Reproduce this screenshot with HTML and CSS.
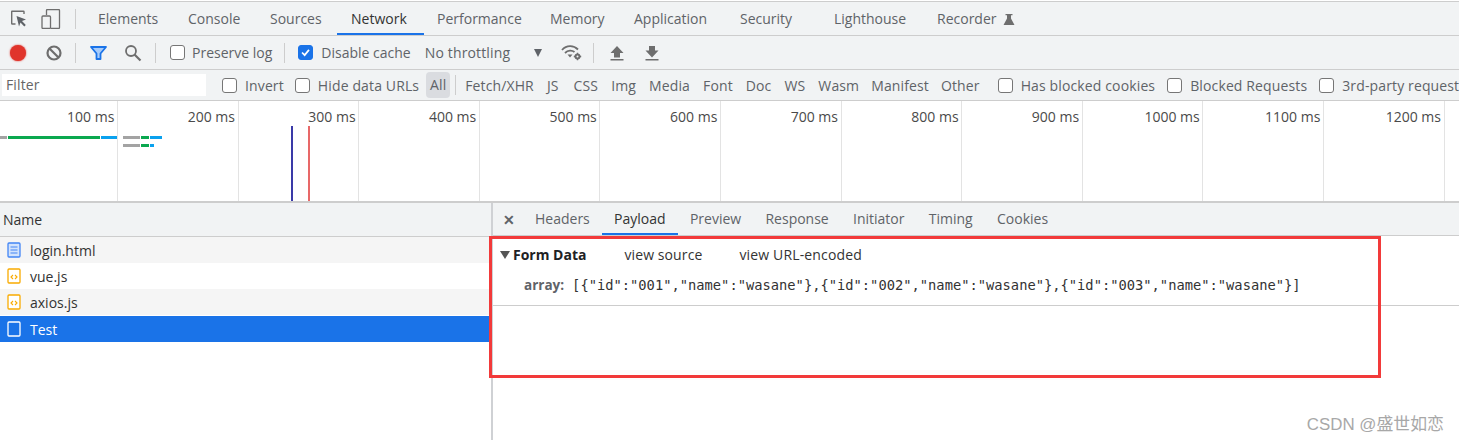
FILE: index.html
```html
<!DOCTYPE html>
<html lang="en">
<head>
<meta charset="utf-8">
<title>Network</title>
<link rel="stylesheet" href="styles.css">
</head>
<body>
<div class="page">
  <div class="tabbar">
    <div class="tools">
      <svg class="ic" width="20" height="20" viewBox="0 0 20 20"><path d="M3.500 1.500H14.500a1.200 1.200 0 0 1 1.200 1.200V5H14.300V2.900H3.400V14.300H6.500V15.700H3.200A1.200 1.200 0 0 1 2 14.500V2.700A1.200 1.200 0 0 1 3.500 1.500z" fill="#6e6e6e"/><path d="M7.500 7l9.500 3.500-4 1.500 3.800 4-1.500 1.500-3.800-4-1.500 4z" fill="#5f6368"/></svg>
      <svg class="ic" width="20" height="20" viewBox="0 0 20 20"><path d="M5.500 6V1.500a1 1 0 0 1 1-1h11a1 1 0 0 1 1 1v17a1 1 0 0 1-1 1h-7.500" fill="none" stroke="#6e6e6e" stroke-width="1.300"/><rect x="1" y="7" width="8.500" height="12.500" rx="1" fill="none" stroke="#6e6e6e" stroke-width="1.300"/></svg>
    </div>
    <span class="vsep tabsep"></span>
    <span class="tab t1">Elements</span>
    <span class="tab t2">Console</span>
    <span class="tab t3">Sources</span>
    <span class="tab active t4">Network</span>
    <span class="tab t5">Performance</span>
    <span class="tab t6">Memory</span>
    <span class="tab t7">Application</span>
    <span class="tab t8">Security</span>
    <span class="tab t9">Lighthouse</span>
    <span class="tab t10">Recorder
      <svg class="flask" width="12" height="13" viewBox="0 0 12 13"><path d="M2.500 1h7v1.300H8v3.200l3.500 6.500H.5L4 5.500V2.300H2.500z" fill="#6e6e6e"/></svg>
    </span>
  </div>

  <div class="toolbar">
    <span class="record"></span>
    <svg class="clear" width="18" height="18" viewBox="0 0 18 18"><circle cx="9" cy="9" r="6.500" fill="none" stroke="#6e6e6e" stroke-width="2.200"/><path d="M4.500 4.500l9 9" stroke="#6e6e6e" stroke-width="2.200"/></svg>
    <span class="vsep s1"></span>
    <svg class="filter" width="20" height="18" viewBox="0 0 20 18"><path d="M2 3h15l-5.500 6.500v5.500h-4v-5.500z" fill="#a8ccfa" stroke="#1a73e8" stroke-width="1.800" stroke-linejoin="round"/></svg>
    <svg class="search" width="20" height="20" viewBox="0 0 20 20"><circle cx="8" cy="8" r="5" fill="none" stroke="#6e6e6e" stroke-width="1.800"/><path d="M11.500 11.500l6 6" stroke="#6e6e6e" stroke-width="2.200"/></svg>
    <span class="vsep s2"></span>
    <label class="check c1"><span class="box"></span>Preserve log</label>
    <span class="vsep s3"></span>
    <label class="check c2"><span class="box on"><svg width="15" height="15" viewBox="0 0 15 15"><path d="M3.500 7.500l3 3 5-6" fill="none" stroke="#fff" stroke-width="2"/></svg></span>Disable cache</label>
    <span class="throttle">No throttling</span>
    <span class="caret"></span>
    <svg class="wifi" width="22" height="17" viewBox="0 0 22 17"><path d="M1 6C5.500 1 12.500 1 17 5.500" fill="none" stroke="#6e6e6e" stroke-width="1.800"/><path d="M4 9C7 6 11 6 13.500 8" fill="none" stroke="#6e6e6e" stroke-width="1.800"/><path d="M6.500 10.500h5L9 13.500z" fill="#6e6e6e"/><circle cx="16.500" cy="12.500" r="2" fill="none" stroke="#6e6e6e" stroke-width="2"/><path d="M16.500 8.800v1.500M16.500 14.700v1.500M12.800 12.500h1.500M18.700 12.500h1.500" stroke="#6e6e6e" stroke-width="1.400"/></svg>
    <span class="vsep s4"></span>
    <svg class="arrow a1" width="16" height="18" viewBox="0 0 16 18"><path d="M8 2l6.500 7H11v4.500H5V9H1.500z M1.500 15h13v1.500h-13z" fill="#6e6e6e"/></svg>
    <svg class="arrow a2" width="16" height="18" viewBox="0 0 16 18"><path d="M5 2h6v4.500h3.500L8 13.500 1.500 6.500H5z M1.500 15h13v1.500h-13z" fill="#6e6e6e"/></svg>
  </div>

  <div class="filterbar">
    <span class="filterinput">Filter</span>
    <label class="check f1"><span class="box"></span>Invert</label>
    <label class="check f2"><span class="box"></span>Hide data URLs</label>
    <span class="pill">All</span>
    <span class="vsep s5"></span>
    <span class="ft w1">Fetch/XHR</span>
    <span class="ft js">JS</span>
    <span class="ft">CSS</span>
    <span class="ft">Img</span>
    <span class="ft">Media</span>
    <span class="ft">Font</span>
    <span class="ft">Doc</span>
    <span class="ft">WS</span>
    <span class="ft">Wasm</span>
    <span class="ft manifest">Manifest</span>
    <span class="ft">Other</span>
    <label class="check f3"><span class="box"></span>Has blocked cookies</label>
    <label class="check f4"><span class="box"></span>Blocked Requests</label>
    <label class="check f5"><span class="box"></span>3rd-party requests</label>
  </div>

  <div class="timeline">
    <div class="tick">100 ms</div><div class="tick">200 ms</div><div class="tick">300 ms</div><div class="tick">400 ms</div>
    <div class="tick">500 ms</div><div class="tick">600 ms</div><div class="tick">700 ms</div><div class="tick">800 ms</div>
    <div class="tick">900 ms</div><div class="tick">1000 ms</div><div class="tick">1100 ms</div><div class="tick">1200 ms</div>
    <span class="bar gray b1"></span><span class="bar green b2"></span><span class="bar blue b3"></span>
    <span class="bar gray b4"></span><span class="bar green b5"></span><span class="bar blue b6"></span>
    <span class="bar gray b7"></span><span class="bar green b8"></span><span class="bar blue b9"></span>
    <span class="mark dcl"></span><span class="mark load"></span>
  </div>

  <div class="split">
    <div class="left">
      <div class="namehead">Name</div>
      <div class="row alt"><svg width="14" height="16" viewBox="0 0 14 16"><rect x="1" y="1" width="12" height="14" rx="1" fill="#d2e3fc" stroke="#4285f4" stroke-width="1.300"/><path d="M3.500 5h7M3.500 8h7M3.500 11h7" stroke="#4285f4" stroke-width="1.200"/></svg>login.html</div>
      <div class="row"><svg width="14" height="16" viewBox="0 0 14 16"><rect x="1" y="1" width="12" height="14" rx="1" fill="#fff" stroke="#f9ab00" stroke-width="1.300"/><path d="M6 7L4 9l2 2M8 7l2 2-2 2" fill="none" stroke="#f9ab00" stroke-width="1.100"/></svg>vue.js</div>
      <div class="row alt"><svg width="14" height="16" viewBox="0 0 14 16"><rect x="1" y="1" width="12" height="14" rx="1" fill="#fff" stroke="#f9ab00" stroke-width="1.300"/><path d="M6 7L4 9l2 2M8 7l2 2-2 2" fill="none" stroke="#f9ab00" stroke-width="1.100"/></svg>axios.js</div>
      <div class="row sel"><svg width="14" height="16" viewBox="0 0 14 16"><rect x="1" y="1" width="12" height="14" rx="1" fill="none" stroke="#fff" stroke-width="1.300"/></svg>Test</div>
    </div>
    <div class="right">
      <div class="dtabs">
        <span class="close">✕</span>
        <span class="dtab">Headers</span>
        <span class="dtab active">Payload</span>
        <span class="dtab">Preview</span>
        <span class="dtab">Response</span>
        <span class="dtab">Initiator</span>
        <span class="dtab">Timing</span>
        <span class="dtab">Cookies</span>
      </div>
      <div class="formhead">
        <span class="tri"></span><b class="ftitle">Form Data</b>
        <span class="vs">view source</span><span class="vu">view URL-encoded</span>
      </div>
      <div class="formrow"><b class="key">array:</b><code class="val">[{"id":"001","name":"wasane"},{"id":"002","name":"wasane"},{"id":"003","name":"wasane"}]</code></div>
    </div>
  </div>
  <div class="redbox"></div>
  <div class="mark-csdn">CSDN @盛世如恋</div>
</div>
</body>
</html>
```

FILE: styles.css
```css
* { box-sizing: border-box; }
html, body { margin: 0; padding: 0; background: #fff; }
body { font-family: "Open Sans", "Noto Sans", sans-serif; font-size: 14px; color: #5f6368; }
.page { position: relative; width: 1459px; height: 440px; overflow: hidden; }

.tabbar { display: flex; align-items: center; height: 35px; margin-top: 1px; background: #f1f3f4; border-top: 1px solid #cdcdcd; border-bottom: 1px solid #cdcdcd; padding-left: 9px; white-space: nowrap; }
.tools { display: flex; gap: 12px; width: 66px; }
.ic { display: block; }
.vsep { display: inline-block; width: 1px; height: 20px; background: #cdcdcd; flex: none; }
.tab { height: 33px; line-height: 33px; flex: none; }
.t1 { margin-left: 22px; width: 90px; }
.t2 { width: 82px; }
.t3 { width: 67px; }
.t4 { width: 87px; padding-left: 14px; color: #333; border-bottom: 2px solid #1a73e8; }
.t5 { margin-left: 13px; width: 113px; }
.t6 { width: 84px; }
.t7 { width: 106px; }
.t8 { width: 94px; }
.t9 { width: 103px; }
.flask { vertical-align: -2px; margin-left: 3px; }

.toolbar { display: flex; align-items: center; height: 34px; background: #f1f3f4; border-bottom: 1px solid #cdcdcd; white-space: nowrap; }
.record { width: 16px; height: 16px; border-radius: 50%; background: #e0342b; box-shadow: 0 0 2px #e0342b; margin-left: 10px; flex: none; }
.clear { margin-left: 19px; }
.toolbar .s1 { margin-left: 12px; }
.filter { margin-left: 13px; }
.search { margin-left: 14px; }
.toolbar .s2 { margin-left: 12px; }
.check { display: inline-flex; align-items: center; flex: none; }
.box { display: inline-flex; align-items: center; justify-content: center; width: 15px; height: 15px; border: 1px solid #767676; border-radius: 3px; background: #fff; margin-right: 8px; flex: none; }
.box.on { background: #1a73e8; border-color: #1a73e8; }
.c1 { margin-left: 14px; }
.c1 .box { margin-right: 7px; }
.s3 { margin-left: 12px; }
.c2 { margin-left: 13px; }
.throttle { margin-left: 14px; letter-spacing: .15px; }
.caret { margin-left: 24px; width: 0; height: 0; border-left: 4.5px solid transparent; border-right: 4.5px solid transparent; border-top: 8px solid #5f6368; }
.wifi { margin-left: 19px; }
.s4 { margin-left: 10px; }
.a1 { margin-left: 15px; }
.a2 { margin-left: 19px; }

.filterbar { display: flex; align-items: center; height: 31px; background: #f1f3f4; border-bottom: 1px solid #cdcdcd; white-space: nowrap; overflow: hidden; letter-spacing: .13px; }
.filterinput { width: 204px; height: 22px; margin-left: 2px; padding-left: 4px; background: #fff; line-height: 22px; color: #666; flex: none; }
.f1 { margin-left: 16px; }
.f2 { margin-left: 11px; }
.pill { margin-left: 7px; width: 24px; height: 26px; line-height: 26px; text-align: center; background: #dadce0; border-radius: 4px; flex: none; }
.s5 { margin-left: 5px; }
.ft { margin-left: 13px; flex: none; }
.ft.w1 { margin-left: 9px; }
.ft.js { padding-right: 2px; }
.ft.manifest { margin-left: 12px; margin-right: -1px; }
.f3 { margin-left: 18px; }
.f4 { margin-left: 12px; }
.f5 { margin-left: 12px; }

.timeline { position: relative; display: flex; height: 102px; border-bottom: 2px solid #cdcdcd; background: #fff; }
.tick { flex: none; width: 120.6px; height: 100px; padding: 6px 2.600px 0 0; text-align: right; border-right: 1px solid #e3e3e3; color: #4a4a4a; white-space: nowrap; }
.tick:first-child { width: 118px; }
.bar { position: absolute; height: 3px; }
.gray { background: #a3a3a3; }
.green { background: #0aa84f; }
.blue { background: #0aa1ee; }
.b1 { left: 0; top: 35px; width: 7px; }
.b2 { left: 8px; top: 35px; width: 92px; }
.b3 { left: 101px; top: 35px; width: 16px; }
.b4 { left: 123px; top: 35px; width: 17px; }
.b5 { left: 141px; top: 35px; width: 8px; }
.b6 { left: 150px; top: 35px; width: 12px; }
.b7 { left: 123px; top: 43px; width: 17px; }
.b8 { left: 141px; top: 43px; width: 8px; }
.b9 { left: 150px; top: 43px; width: 4px; }
.mark { position: absolute; top: 25px; width: 2px; height: 75px; }
.dcl { left: 291px; background: #3a3aa8; }
.load { left: 308px; background: #e86868; }

.split { display: flex; height: 237px; }
.left { width: 491px; flex: none; border-right: 2px solid #cfd1d4; box-sizing: content-box; background: #fff; }
.namehead { height: 34px; line-height: 33px; padding-left: 3px; background: #f1f3f4; border-bottom: 1px solid #cdcdcd; color: #333; }
.row { display: flex; align-items: center; height: 26px; padding-left: 7px; color: #333; background: #fff; }
.row svg { margin-right: 9px; flex: none; }
.row.alt { background: #f5f5f5; }
.row.sel { background: #1a73e8; color: #fff; margin-top: 1px; }
.right { flex: 1; }
.dtabs { display: flex; align-items: center; height: 33px; background: #f1f3f4; border-bottom: 1px solid #cdcdcd; }
.close { width: 42px; padding-left: 10px; font-size: 14px; font-weight: 700; color: #5f6368; flex: none; }
.dtab { height: 32px; line-height: 31px; margin-right: 24.300px; flex: none; }
.dtab.active { color: #333; margin: 0 12.300px 0 -12px; padding: 0 12px; border-bottom: 2px solid #1a73e8; }
.formhead { display: flex; align-items: center; height: 37px; padding-left: 7px; color: #333; }
.tri { width: 0; height: 0; border-left: 5px solid transparent; border-right: 5px solid transparent; border-top: 8px solid #555; margin-right: 3px; }
.ftitle { font-weight: 700; color: #202124; }
.vs { margin-left: 38px; letter-spacing: .1px; }
.vu { margin-left: 37px; letter-spacing: .15px; }
.formrow { display: flex; align-items: center; height: 33px; padding: 0 0 9px 31px; border-bottom: 1px solid #cdcdcd; }
.key { font-size: 13.500px; color: #5f6368; margin-right: 8px; }
.val { font-family: "DejaVu Sans Mono", monospace; font-size: 13.750px; color: #333; }

.redbox { position: absolute; left: 489px; top: 236px; width: 892px; height: 142px; border: 3px solid #f23a3a; }
.mark-csdn { position: absolute; right: 15px; top: 410px; font-family: "Liberation Sans", "Noto Sans CJK SC", sans-serif; font-size: 16.900px; color: #a8a8a8; }
```
